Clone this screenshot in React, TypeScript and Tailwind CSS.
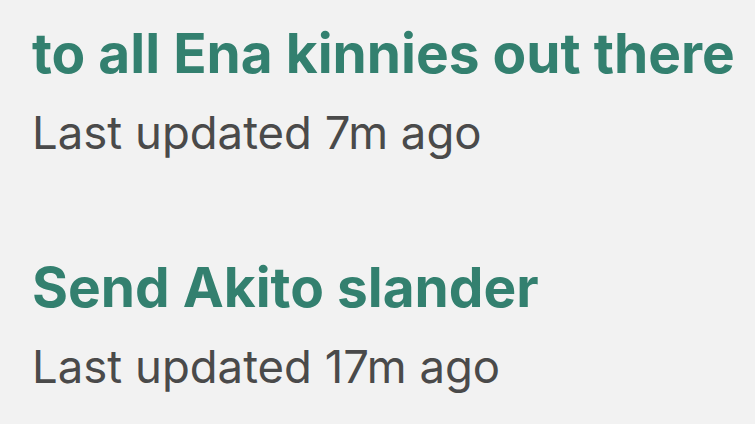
const items = [
  { title: 'to all Ena kinnies out there', updated: '7m ago' },
  { title: 'Send Akito slander', updated: '17m ago' },
];

export default function App() {
  return (
    <div className="w-[755px] h-[424px] overflow-hidden bg-[#f2f2f2] pl-[32px] pt-[21px] font-['Inter','Liberation_Sans',sans-serif]">
      <div className="flex flex-col gap-[96px]">
        {items.map((item) => (
          <div key={item.title} className="flex flex-col">
            <h2 className="text-[55px] leading-[64px] font-bold text-[#33806f] whitespace-nowrap">
              {item.title}
            </h2>
            <p className="mt-[22px] text-[45.5px] leading-[52px] text-[#4a4a4a] whitespace-nowrap">
              Last updated {item.updated}
            </p>
          </div>
        ))}
      </div>
    </div>
  );
}
